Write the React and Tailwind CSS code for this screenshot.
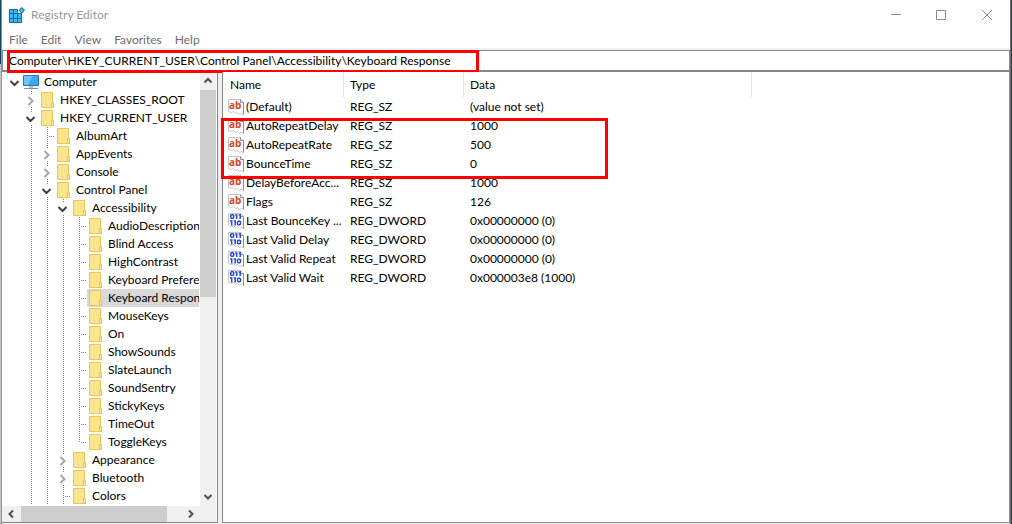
import { useState } from 'react';

// Registry tree, flattened. level = depth, guides = columns that keep a dotted line
const treeNodes = [
  { name: 'Computer', level: 0, state: 'open', guides: [] },
  { name: 'HKEY_CLASSES_ROOT', level: 1, state: 'closed', guides: [] },
  { name: 'HKEY_CURRENT_USER', level: 1, state: 'open', guides: [] },
  { name: 'AlbumArt', level: 2, state: 'leaf', guides: [1] },
  { name: 'AppEvents', level: 2, state: 'closed', guides: [1] },
  { name: 'Console', level: 2, state: 'closed', guides: [1] },
  { name: 'Control Panel', level: 2, state: 'open', guides: [1] },
  { name: 'Accessibility', level: 3, state: 'open', guides: [1, 2] },
  { name: 'AudioDescription', level: 4, state: 'leaf', guides: [1, 2, 3] },
  { name: 'Blind Access', level: 4, state: 'leaf', guides: [1, 2, 3] },
  { name: 'HighContrast', level: 4, state: 'leaf', guides: [1, 2, 3] },
  { name: 'Keyboard Preference', level: 4, state: 'leaf', guides: [1, 2, 3] },
  { name: 'Keyboard Response', level: 4, state: 'leaf', guides: [1, 2, 3] },
  { name: 'MouseKeys', level: 4, state: 'leaf', guides: [1, 2, 3] },
  { name: 'On', level: 4, state: 'leaf', guides: [1, 2, 3] },
  { name: 'ShowSounds', level: 4, state: 'leaf', guides: [1, 2, 3] },
  { name: 'SlateLaunch', level: 4, state: 'leaf', guides: [1, 2, 3] },
  { name: 'SoundSentry', level: 4, state: 'leaf', guides: [1, 2, 3] },
  { name: 'StickyKeys', level: 4, state: 'leaf', guides: [1, 2, 3] },
  { name: 'TimeOut', level: 4, state: 'leaf', guides: [1, 2, 3] },
  { name: 'ToggleKeys', level: 4, state: 'leaf', last: true, guides: [1, 2, 3] },
  { name: 'Appearance', level: 3, state: 'closed', guides: [1, 2] },
  { name: 'Bluetooth', level: 3, state: 'closed', guides: [1, 2] },
  { name: 'Colors', level: 3, state: 'leaf', guides: [1, 2] },
];

const values = [
  { name: '(Default)', type: 'REG_SZ', data: '(value not set)' },
  { name: 'AutoRepeatDelay', type: 'REG_SZ', data: '1000' },
  { name: 'AutoRepeatRate', type: 'REG_SZ', data: '500' },
  { name: 'BounceTime', type: 'REG_SZ', data: '0' },
  { name: 'DelayBeforeAcc...', type: 'REG_SZ', data: '1000' },
  { name: 'Flags', type: 'REG_SZ', data: '126' },
  { name: 'Last BounceKey ...', type: 'REG_DWORD', data: '0x00000000 (0)' },
  { name: 'Last Valid Delay', type: 'REG_DWORD', data: '0x00000000 (0)' },
  { name: 'Last Valid Repeat', type: 'REG_DWORD', data: '0x00000000 (0)' },
  { name: 'Last Valid Wait', type: 'REG_DWORD', data: '0x000003e8 (1000)' },
];

const menus = ['File', 'Edit', 'View', 'Favorites', 'Help'];

const RegistryIcon = () => (
  <svg className="size-4 shrink-0" viewBox="0 0 16 16" aria-hidden="true">
    <path d="M0 2h9v4h4v10H0z" fill="#0b6fa8" />
    <path d="M1 3h3v3H1zM5 3h3v3H5zM1 7h3v4H1zM5 7h3v4H5zM9 7h3v4H9zM1 12h3v3H1zM5 12h3v3H5zM9 12h3v3H9z" fill="#3cb9ec" />
    <path d="M12.500 0 16 3l-3 3.500L9.500 3.500z" fill="#0b6fa8" />
    <path d="m12.600 1.500 1.900 1.700-1.700 1.900-1.900-1.700z" fill="#5fd0f7" />
  </svg>
);

const ComputerIcon = () => (
  <svg className="h-4 w-4 shrink-0" viewBox="0 0 16 16" aria-hidden="true">
    <path d="M.5 1.500h15v10H.5z" fill="#3aa9ee" stroke="#2a79ad" />
    <path d="M1 2h9L5 11H1z" fill="#6cc5f7" />
    <path d="M6 12h4v2H6z" fill="#b9c3ca" />
    <path d="M1 14h14v1H1z" fill="#7f929e" />
  </svg>
);

const FolderIcon = () => (
  <svg className="h-4 w-4 shrink-0" viewBox="0 0 16 16" aria-hidden="true">
    <path d="M2.500.5h11v15h-11z" fill="#ffe48f" stroke="#ebc852" />
    <path d="M12.500 10.500h2v5h-2z" fill="#ffe9a2" stroke="#ebc33c" />
  </svg>
);

const Chevron = ({ dir, className }) => {
  const paths = {
    down: 'M4.500 6 8 9.500 11.500 6',
    up: 'M4.500 9.500 8 6 11.500 9.500',
    right: 'M6 4.500 9.500 8 6 11.500',
    left: 'M9.500 4.500 6 8 9.500 11.500',
  };
  return (
    <svg className={className} viewBox="0 0 16 16" fill="none" stroke="currentColor" strokeWidth="2" aria-hidden="true">
      <path d={paths[dir]} />
    </svg>
  );
};

const ValueIcon = ({ type }) => (
  <svg className="h-4 w-4 shrink-0" viewBox="0 0 16 16" aria-hidden="true">
    <path d="M.5.5h12l3 3v12l-2-1-2 1-2-2-2 1-2-2-2 1-3-1z" fill="#fff" stroke="#c4c4c4" />
    <path d="M12.500.5v3h3v12" fill="none" stroke="#8f8f8f" />
    {type === 'REG_SZ' ? (
      <text x="1" y="10" fontSize="10" fontWeight="bold" fontFamily="Open Sans, sans-serif" fill="#d9451f">ab</text>
    ) : (
      <g fill="none" stroke="#2347d8" strokeWidth="1.500">
        <rect x="2.700" y="1.700" width="3" height="3.500" rx="1" />
        <path d="M7.200 2.100h1.500v3.900M10.700 2.100h1.500v3.900M2 8h1.700v4.400M5.700 8h1.500v4.400" />
        <rect x="9.500" y="8.200" width="3" height="3.500" rx="1" />
      </g>
    )}
  </svg>
);

// One 16px tree column: dotted line, elbow or expander
const GuideCell = ({ line, elbow, last }) => (
  <svg className="h-[18px] w-4 shrink-0 text-[#808080]" viewBox="0 0 16 18" stroke="currentColor" strokeDasharray="1 1" aria-hidden="true">
    {line && <path d={last ? 'M8.500 0v10' : 'M8.500 0v18'} />}
    {elbow && <path d="M10 9.500h6" />}
  </svg>
);

const Expander = ({ open, root }) => (
  <svg className="h-[18px] w-4 shrink-0" viewBox="0 0 16 18" fill="none" aria-hidden="true">
    {!root && <path d="M8.500 0v3M8.500 16v2" stroke="#808080" strokeDasharray="1 1" />}
    {open ? (
      <path d="m3.500 8 4 4 4-4" stroke="#404040" strokeWidth="2" />
    ) : (
      <path d="m5.500 6 4 4-4 4" stroke="#a6a6a6" strokeWidth="2" />
    )}
  </svg>
);

const TreeRow = ({ node, selected, onSelect }) => {
  const columns = Array.from({ length: node.level }, (_, i) => i);
  return (
    <li role="treeitem" aria-selected={selected} className="flex h-[18px] items-center">
      {columns.map((c) => (
        <GuideCell key={c} line={node.guides.includes(c)} />
      ))}
      {node.state === 'leaf' ? (
        <GuideCell line elbow last={node.last} />
      ) : (
        <Expander open={node.state === 'open'} root={node.level === 0} />
      )}
      <button
        onClick={onSelect}
        className={`flex h-[18px] min-w-0 flex-1 items-center gap-1 overflow-hidden whitespace-nowrap text-left ${selected ? 'bg-[#d9d9d9]' : ''}`}
      >
        {node.level === 0 ? <ComputerIcon /> : <FolderIcon />}
        <span className="pl-px">{node.name}</span>
      </button>
    </li>
  );
};

const TreePanel = () => {
  const [selected, setSelected] = useState('Keyboard Response');
  return (
    <aside className="flex w-[216px] shrink-0 flex-col border-r border-b border-[#828790] bg-white pr-px">
      <div className="flex min-h-0 flex-1">
        <ul role="tree" aria-label="Registry keys" className="min-w-0 flex-1 overflow-hidden pt-px pr-px pl-[5px]">
          {treeNodes.map((node) => (
            <TreeRow
              key={node.name}
              node={node}
              selected={node.name === selected}
              onSelect={() => setSelected(node.name)}
            />
          ))}
        </ul>
        <div className="flex w-4 shrink-0 flex-col bg-[#f0f0f0] text-[#505050]">
          <Chevron dir="up" className="h-[18px] w-4" />
          <div className="flex flex-1 flex-col">
            <div className="h-[52%] bg-[#cdcdcd]" />
          </div>
          <Chevron dir="down" className="h-[18px] w-4" />
        </div>
      </div>
      <div className="flex h-4 shrink-0 items-center bg-[#f0f0f0] text-[#505050]">
        <Chevron dir="left" className="h-4 w-[19px]" />
        <div className="flex h-4 flex-1">
          <div className="h-4 w-[146px] bg-[#cdcdcd]" />
        </div>
        <Chevron dir="right" className="mr-4 h-4 w-[18px]" />
      </div>
    </aside>
  );
};

const ValuesPanel = () => (
  <main className="relative min-w-0 flex-1 border-r border-b border-l border-[#828790] bg-white">
    <table className="w-full table-fixed border-separate border-spacing-0">
      <colgroup>
        <col className="w-[121px]" />
        <col className="w-[120px]" />
        <col className="w-[288px]" />
        <col />
      </colgroup>
      <thead>
        <tr className="h-[25px] text-left">
          <th className="border-r border-[#e5e5e5] p-0 pl-[7px] font-normal">Name</th>
          <th className="border-r border-[#e5e5e5] p-0 pl-[6px] font-normal">Type</th>
          <th className="border-r border-[#e5e5e5] p-0 pl-[6px] font-normal">Data</th>
          <td />
        </tr>
      </thead>
      <tbody>
        {values.map((v) => (
          <tr key={v.name} className="h-[19px] whitespace-nowrap">
            <td className="p-0">
              <span className="flex items-center gap-[2px] pl-[5px]">
                <ValueIcon type={v.type} />
                {v.name}
              </span>
            </td>
            <td className="p-0 pl-[6px]">{v.type}</td>
            <td className="p-0 pl-[6px]">{v.data}</td>
            <td />
          </tr>
        ))}
      </tbody>
    </table>
    {/* highlighted values */}
    <div className="pointer-events-none absolute top-[46px] -left-[2px] h-[61px] w-[387px] border-3 border-[#ff0000]" />
  </main>
);

const TitleBar = () => (
  <header className="flex h-[30px] shrink-0 items-center">
    <div className="flex flex-1 items-center gap-[6px] pl-[7px]">
      <RegistryIcon />
      <h1 className="text-xs text-[#999999]">Registry Editor</h1>
    </div>
    <div className="flex text-[#8c8c8c]">
      <button aria-label="Minimize" className="flex h-[30px] w-11 items-center justify-center">
        <svg className="size-[10px]" viewBox="0 0 10 10" stroke="currentColor"><path d="M0 4.500h10" /></svg>
      </button>
      <button aria-label="Maximize" className="flex h-[30px] w-[46px] items-center justify-center">
        <svg className="size-[10px]" viewBox="0 0 10 10" stroke="currentColor" fill="none"><path d="M.5.5h9v9h-9z" /></svg>
      </button>
      <button aria-label="Close" className="flex h-[30px] w-[46px] items-center justify-center">
        <svg className="size-[10px]" viewBox="0 0 10 10" stroke="currentColor"><path d="m0 0 10 10M10 0 0 10" /></svg>
      </button>
    </div>
  </header>
);

const App = () => {
  const [path, setPath] = useState('Computer\\HKEY_CURRENT_USER\\Control Panel\\Accessibility\\Keyboard Response');

  return (
    <div className="flex h-screen w-full overflow-hidden bg-white font-['Lato','Open_Sans',sans-serif] text-xs leading-4 text-black">
      <div className="flex w-[2px] shrink-0 flex-col border-r border-[#8f9299]">
        <div className="h-16 bg-[#0e4a5a]" />
        <div className="flex-1 bg-[#c4c4ca]" />
      </div>
      <div className="flex min-w-0 flex-1 flex-col">
        <TitleBar />
        <nav className="flex h-[18px] shrink-0 items-center gap-[13px] pt-px pl-[7px] text-[#6d6d6d]">
          {menus.map((menu) => (
            <button key={menu}>{menu}</button>
          ))}
        </nav>
        <div className="relative shrink-0 border-t-2 border-[#f0f0f0]">
          <input
            aria-label="Address"
            value={path}
            onChange={(e) => setPath(e.target.value)}
            className="block h-[22px] w-full border border-b-2 border-[#828790] bg-white pl-[6px] outline-none"
          />
          <div className="pointer-events-none absolute top-0 left-[5px] h-[23px] w-[472px] border-3 border-[#ff0000]" />
        </div>
        <div className="flex min-h-0 flex-1 gap-1 bg-[#f0f0f0] pb-px">
          <TreePanel />
          <ValuesPanel />
        </div>
      </div>
      <div className="w-[2px] shrink-0 border-r border-[#3c3c44] bg-[#6b6b70]" />
    </div>
  );
};

export default App;
